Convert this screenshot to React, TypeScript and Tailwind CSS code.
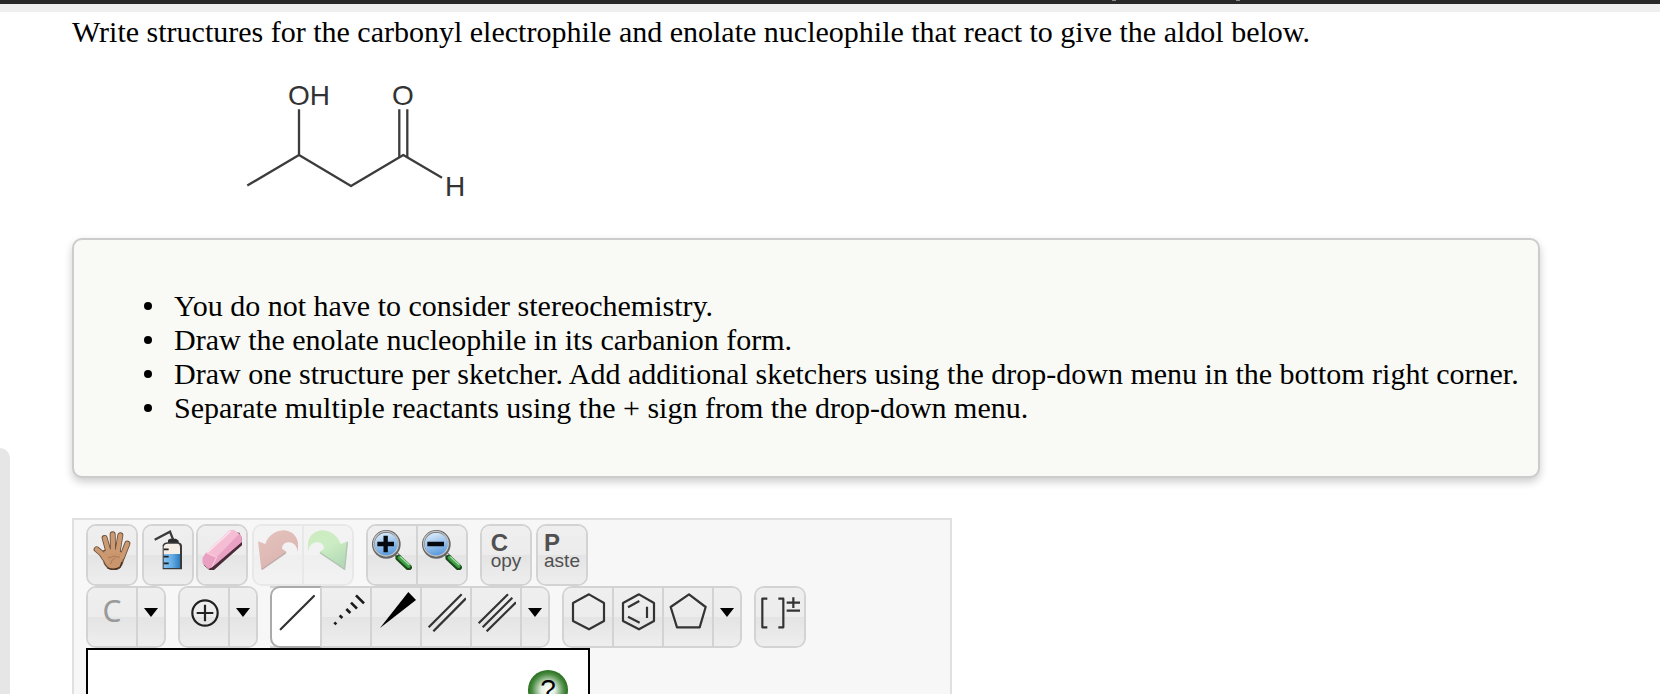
import type { ReactNode } from "react";

const hints = [
  "You do not have to consider stereochemistry.",
  "Draw the enolate nucleophile in its carbanion form.",
  "Draw one structure per sketcher. Add additional sketchers using the drop-down menu in the bottom right corner.",
  "Separate multiple reactants using the + sign from the drop-down menu.",
];

function Icon({ children, line = false }: { children: ReactNode; line?: boolean }) {
  return (
    <svg
      viewBox="0 0 120 120"
      className="block size-10"
      aria-hidden="true"
      fill={line ? "none" : undefined}
      stroke={line ? "#333" : undefined}
      strokeWidth={line ? 6.6 : undefined}
      strokeLinejoin={line ? "round" : undefined}
    >
      {children}
    </svg>
  );
}

function Group({ children, faded = false }: { children: ReactNode; faded?: boolean }) {
  return (
    <div
      className={
        faded
          ? "flex h-[62px] divide-x-2 divide-[#d3d3d3] overflow-hidden rounded-[10px] border-2 border-[#d3d3d3] opacity-40"
          : "flex h-[62px] divide-x-2 divide-[#d3d3d3] overflow-hidden rounded-[10px] border-2 border-[#d3d3d3]"
      }
    >
      {children}
    </div>
  );
}

const face = "bg-[linear-gradient(#efefef,#ececec_50%,#e4e4e4_50%,#eeeeee)]";

function Tool({ label, children, disabled = false }: { label: string; children: ReactNode; disabled?: boolean }) {
  return (
    <button type="button" aria-label={label} disabled={disabled} className={`box-content flex h-[58px] w-12 items-start justify-center ${face}`}>
      <span className="pt-1">{children}</span>
    </button>
  );
}

function WordTool({ first, rest }: { first: string; rest: string }) {
  return (
    <button type="button" aria-label={first + rest} className={`flex h-[58px] w-12 items-start justify-center pt-[7px] text-[#505050] ${face}`}>
      <span className="flex flex-col text-left">
        <span className="text-[24px] leading-5 font-bold">{first}</span>
        <span className="text-[19px] leading-4">{rest}</span>
      </span>
    </button>
  );
}

function More({ label }: { label: string }) {
  return (
    <button type="button" aria-label={label} className={`box-content flex h-[58px] w-[26px] items-start justify-center ${face}`}>
      <svg viewBox="0 0 14 10" className="mt-5 h-[10px] w-[14px]" aria-hidden="true">
        <path d="M0 0h14L7 9z" />
      </svg>
    </button>
  );
}

function Molecule() {
  return (
    <svg viewBox="240 76 240 130" className="ml-[168px] h-[130px] w-[240px]" role="img" aria-label="3-hydroxybutanal">
      <g fill="none" stroke="#3c3c3c" strokeWidth="2.3" strokeLinejoin="round">
        <path d="M247.3 185.6 299 155l52 31 52.3-31 38.7 22.7" />
        <path d="M299 109.3V155M399.3 109.3V157M407.3 109.3V157" />
      </g>
      <g fill="#333" fontSize="28" className="font-['Liberation_Sans',sans-serif]">
        <text x="288" y="105">OH</text>
        <text x="392" y="105">O</text>
        <text x="445" y="196">H</text>
      </g>
    </svg>
  );
}

function Magnifier({ id, plus = false }: { id: string; plus?: boolean }) {
  return (
    <Icon>
      <defs>
        <linearGradient id={id} x1="0" y1="0" x2="0.3" y2="1">
          <stop offset="0" stopColor="#f2f8fd" />
          <stop offset="0.5" stopColor="#a5c9ee" />
          <stop offset="1" stopColor="#5a9ade" />
        </linearGradient>
      </defs>
      <path d="M70 70 84 84" stroke="#777" strokeWidth="14" />
      <path d="M70 68 86 84" stroke="#ddd" strokeWidth="5" />
      <path d="M80 84 110 112" stroke="#1c4a1c" strokeWidth="19" strokeLinecap="round" />
      <path d="M83 83 110 108" stroke="#3fa046" strokeWidth="12" strokeLinecap="round" />
      <path d="M86 81 111 104" stroke="#a5dba5" strokeWidth="4" strokeLinecap="round" />
      <circle cx="43" cy="43" r="39" fill={`url(#${id})`} stroke="#666" strokeWidth="8" />
      <circle cx="42" cy="41" r="37" fill="none" stroke="#c4c4c4" strokeWidth="4" />
      <path d={plus ? "M16 42h50M41 17v50" : "M16 42h50"} stroke="#05080c" strokeWidth="13" fill="none" />
    </Icon>
  );
}

const curl = "M0 34 22 42C30 14 58 1 78 1c26 1 42 22 42 41v24c-4-22-16-30-30-29-12 1-18 10-18 19l14 10-76 54z";
const hexagon = "M63 7l45 26v54l-45 25-48-25V33z";
const fingers = "M14 58l14 12 18 26M38 24l12 44M62 13l1 50M85 16l-8 48M106 41 90 82";

function Toolbar() {
  return (
    <div role="toolbar" aria-label="Sketcher tools" className="flex flex-col font-['Liberation_Sans',sans-serif]">
      <div className="flex">
        <div className="mr-1">
          <Group>
            <Tool label="Move">
              <Icon>
                <path d={fingers} stroke="#6b4f3a" strokeWidth="18" strokeLinecap="round" fill="none" />
                <path d="M32 64Q62 44 98 72L93 94Q86 119 66 119 48 119 37 100Z" fill="#c8956c" stroke="#6b4f3a" strokeWidth="4" />
                <path d={fingers} stroke="#cb9a72" strokeWidth="13" strokeLinecap="round" fill="none" />
                <path d="M48 84Q66 74 84 82M56 102Q58 88 70 84" stroke="#ad7a56" strokeWidth="3" fill="none" />
                <path d="M46 114Q66 122 84 112L90 96" stroke="#4a3322" strokeWidth="4" fill="none" />
              </Icon>
            </Tool>
          </Group>
        </div>
        <div className="mr-[2px]">
          <Group>
            <Tool label="Clear">
              <Icon>
                <defs>
                  <linearGradient id="water">
                    <stop offset="0" stopColor="#86c2f0" />
                    <stop offset="0.5" stopColor="#66aee6" />
                    <stop offset="1" stopColor="#2f7cbc" />
                  </linearGradient>
                </defs>
                <path d="M20 29 66 5 75 28" fill="none" stroke="#3a3a3a" strokeWidth="7" />
                <path d="M66 26h18l8 6v10H60V30z" fill="#2c2c2c" />
                <path d="M44 46Q47 37 60 37H90Q102 38 102 50V118H44z" fill="#3a3a3a" />
                <path d="M47 50Q49 41 60 41H88Q96 42 96 52V72H47z" fill="#f5eee6" />
                <path d="M47 72h49v42H47z" fill="url(#water)" />
                <path d="M47 58h15M47 80h15M47 100h15" stroke="#222" strokeWidth="5" />
              </Icon>
            </Tool>
          </Group>
        </div>
        <div className="mr-1">
          <Group>
            <Tool label="Erase">
              <Icon>
                <path d="M4 92 22 76 90 6 112 8 120 26V46L36 120H22L6 106z" fill="#4a2c38" />
                <path d="M2 84 12 68 82 2Q88-1 96 0L118 18 119 36 30 112 20 116 2 100z" fill="#eba6c6" />
                <path d="M12 68 82 2Q88-1 96 0L112 12 44 82z" fill="#f5bdd4" />
                <path d="M16 67 86 3" stroke="#fbe3ec" strokeWidth="5" />
                <path d="M44 82 112 12l7 7v17L30 112z" fill="#e9a2c3" />
                <path d="M12 68 44 82 30 112 20 116 2 100V84z" fill="#eaa0c1" />
                <path d="M12 68 44 82 30 110" fill="none" stroke="#f8d3e2" strokeWidth="3" />
              </Icon>
            </Tool>
          </Group>
        </div>
        <div className="mr-3">
          <Group faded>
            <Tool label="Undo" disabled>
              <Icon>
                <defs>
                  <linearGradient id="undo" x1="0" y1="0" x2="0.6" y2="1">
                    <stop offset="0" stopColor="#c9766b" />
                    <stop offset="0.5" stopColor="#c0655a" />
                    <stop offset="1" stopColor="#b04a3f" />
                  </linearGradient>
                </defs>
                <path d={curl} fill="url(#undo)" />
                <path d="M12 118 84 68" stroke="#6d403b" strokeWidth="4" />
              </Icon>
            </Tool>
            <Tool label="Redo" disabled>
              <Icon>
                <defs>
                  <linearGradient id="redo" x1="1" y1="0" x2="0.4" y2="1">
                    <stop offset="0" stopColor="#8fdc6e" />
                    <stop offset="0.5" stopColor="#8ee078" />
                    <stop offset="1" stopColor="#4fae57" />
                  </linearGradient>
                </defs>
                <path d={curl} transform="matrix(-1 0 0 1 120 0)" fill="url(#redo)" />
                <path d="M118 36 110 118 36 68" fill="none" stroke="#4f7a4d" strokeWidth="4" />
              </Icon>
            </Tool>
          </Group>
        </div>
        <div className="mr-3">
          <Group>
            <Tool label="Zoom in"><Magnifier id="lens-in" plus /></Tool>
            <Tool label="Zoom out"><Magnifier id="lens-out" /></Tool>
          </Group>
        </div>
        <div className="flex gap-1">
          <Group><WordTool first="C" rest="opy" /></Group>
          <Group><WordTool first="P" rest="aste" /></Group>
        </div>
      </div>
      <div className="flex gap-3">
        <Group>
          <Tool label="Carbon">
            <span className="block font-['Noto_Sans',sans-serif] text-[30px] leading-[38px] text-[#9a9a9a]">C</span>
          </Tool>
          <More label="More elements" />
        </Group>
        <Group>
          <Tool label="Positive charge">
            <Icon line><circle cx="63" cy="63" r="38" stroke="#222" /><path d="M63 38v50M38 63h50" stroke="#222" /></Icon>
          </Tool>
          <More label="More charges" />
        </Group>
        <div className="flex h-[62px] divide-x-2 divide-[#d3d3d3] rounded-r-[10px] border-y-2 border-r-2 border-[#d3d3d3] [&>*:last-child]:rounded-r-[8px]">
          <button
            type="button"
            aria-label="Single bond"
            aria-pressed="true"
            className="-my-[2px] box-content flex h-[58px] w-12 items-start justify-center rounded-l-[10px] border-y-2 border-l-2 border-y-[#aaa] border-l-[#aaa] bg-white"
          >
            <span className="pt-1"><Icon line><path d="M14 112 114 12" strokeLinecap="round" /></Icon></span>
          </button>
          <Tool label="Hashed bond">
            <Icon line>
              <path d="M25 91l6 6M41 70l8 8M61 51l12 12M75 32l18 18M90 10l24 24" strokeWidth="8" stroke="#1a1a1a" />
            </Icon>
          </Tool>
          <Tool label="Wedge bond">
            <Icon><path d="M12 108 97 0l23 24z" fill="#000" /></Icon>
          </Tool>
          <Tool label="Double bond">
            <Icon line><path d="M8 106 107 7M22 118l98-99" /></Icon>
          </Tool>
          <Tool label="Triple bond">
            <Icon line><path d="M8 94 96 7M20 106l89-89M32 118l88-87" /></Icon>
          </Tool>
          <More label="More bonds" />
        </div>
        <Group>
          <Tool label="Cyclohexane"><Icon line><path d={hexagon} /></Icon></Tool>
          <Tool label="Benzene">
            <Icon line><path d={hexagon} /><path d="M30 46 64 27M87 44v34M30 74l35 18" /></Icon>
          </Tool>
          <Tool label="Cyclopentane"><Icon line><path d="M63 7l50 38-18 61H27L8 45z" /></Icon></Tool>
          <More label="More rings" />
        </Group>
        <Group>
          <Tool label="Bracket charge">
            <Icon line><path d="M22 20H7v86h15M55 20h15v86H55M80 32h40M100 16v32M80 56h40" /></Icon>
          </Tool>
        </Group>
      </div>
    </div>
  );
}

export default function App() {
  return (
    <div className="flex h-screen flex-col overflow-hidden bg-white font-['Liberation_Serif',serif] text-black">
      <div className="flex h-1 shrink-0 items-start bg-[#282828]">
        <span className="ml-[67%] h-px w-1 bg-[#888]" />
        <span className="ml-[120px] h-px w-1 bg-[#888]" />
      </div>
      <div className="h-2 shrink-0 bg-[#efefef]" />
      <div className="flex min-h-0 flex-1">
        <aside className="mt-[436px] w-[10px] shrink-0 rounded-tr-[10px] bg-[#e6e6e6]" />
        <main className="flex min-w-0 flex-1 flex-col items-start pt-[3px] pr-[120px] pl-[62px]">
          <p className="shrink-0 text-[30px] leading-[34px]">
            Write structures for the carbonyl electrophile and enolate nucleophile that react to give the aldol below.
          </p>
          <div className="mt-[27px] mb-8 shrink-0">
            <Molecule />
          </div>
          <ul className="flex w-full shrink-0 flex-col rounded-[10px] border-2 border-[#ccc] bg-[#f9faf5] pt-[49px] pb-[51px] pl-[70px] text-[30px] leading-[34px] shadow-[0_4px_8px_rgba(0,0,0,0.2)]">
            {hints.map((hint) => (
              <li key={hint} className="flex items-center gap-[22px]">
                <span className="size-2 shrink-0 rounded-full bg-black" />
                {hint}
              </li>
            ))}
          </ul>
          <section aria-label="Structure sketcher" className="mt-10 w-[880px] shrink-0 border-2 border-[#e0e0e0] bg-[#f7f7f7] px-3 pt-1 pb-3">
            <Toolbar />
            <div className="flex h-[400px] w-[504px] items-start justify-end border-2 border-black bg-white p-5">
              <button
                type="button"
                aria-label="Help"
                className="flex size-10 items-center justify-center rounded-full bg-[radial-gradient(circle_closest-side,#ffffff_0%,#e4efe2_35%,#4c8c44_80%,#26701c_100%)] font-['Liberation_Sans',sans-serif] text-[28px] leading-10"
              >
                ?
              </button>
            </div>
          </section>
        </main>
      </div>
    </div>
  );
}
